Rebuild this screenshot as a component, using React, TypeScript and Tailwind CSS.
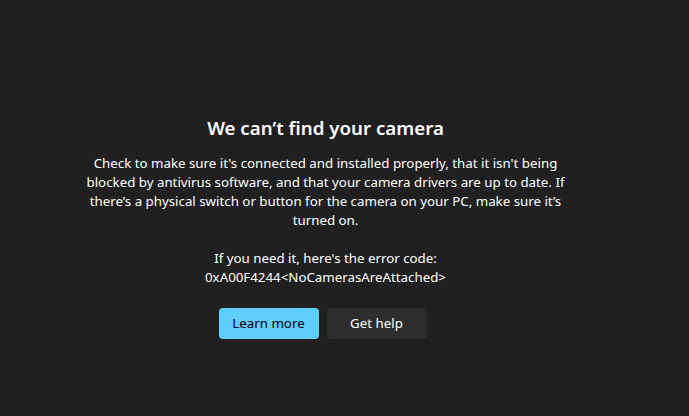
import React from 'react';

export default function App() {
  return (
    <div
      className="w-[689px] h-[416px] bg-[#202020] text-white flex flex-col items-center pt-[115px] pr-[38px]"
      style={{ fontFamily: '"Noto Sans", "Open Sans", sans-serif' }}
    >
      <h1 className="text-[18.7px] leading-[26px] font-semibold">We can’t find your camera</h1>
      <p className="mt-[13px] w-[484px] text-center text-[13.3px] leading-[19px]">
        Check to make sure it's connected and installed properly, that it isn't being blocked by antivirus
        software, and that your camera drivers are up to date. If there’s a physical switch or button for the
        camera on your PC, make sure it’s turned on.
      </p>
      <p className="mt-[19px] text-center text-[13.3px] leading-[18.5px]">
        If you need it, here's the error code:
        <br />
        0xA00F4244&lt;NoCamerasAreAttached&gt;
      </p>
      <div className="mt-[22px] mr-[6px] flex gap-2">
        <button className="w-[100px] h-[31px] rounded-[4px] bg-[#60cdff] text-black text-[13.3px]">Learn more</button>
        <button className="w-[100px] h-[31px] rounded-[4px] bg-[#2d2d2d] text-white text-[13.3px]">Get help</button>
      </div>
    </div>
  );
}
